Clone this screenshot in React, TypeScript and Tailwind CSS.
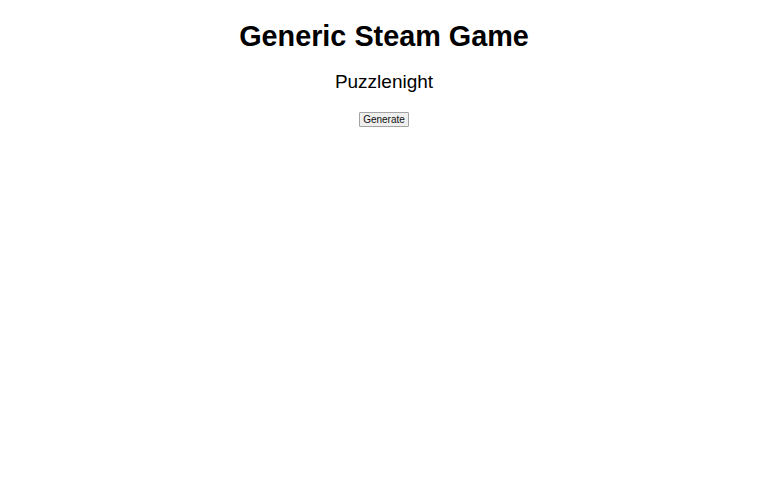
export default function App() {
	return (
		<div className="flex min-h-[480px] flex-col items-center bg-white font-['Liberation_Sans',Arial,sans-serif] text-black">
			<h1 className="mt-[19px] text-[28.8px] leading-[34px] font-bold">
				Generic Steam Game
			</h1>
			<h3 className="mt-[18px] text-[19px] leading-[22px]">Puzzlenight</h3>
			<button
				className="mt-[19px] h-[15px] rounded-[1px] border border-[#a3a3a3] bg-[#efefef] px-[3px] text-[10px] leading-[13px] text-[#111]"
				type="button"
			>
				Generate
			</button>
		</div>
	);
}
